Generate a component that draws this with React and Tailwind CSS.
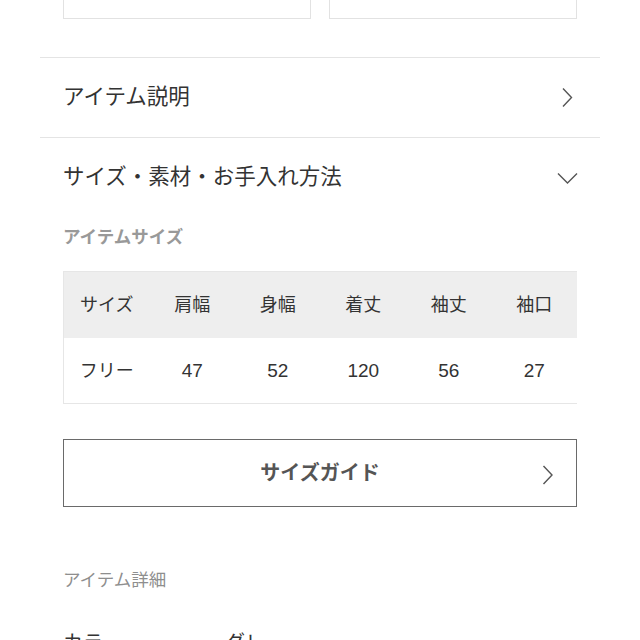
export default function App() {
  const font = { fontFamily: '"Liberation Sans", "Noto Sans CJK JP", sans-serif' };
  const heads = ["サイズ", "肩幅", "身幅", "着丈", "袖丈", "袖口"];
  const vals = ["フリー", "47", "52", "120", "56", "27"];
  return (
    <div className="w-[640px] h-[640px] overflow-hidden bg-white text-[#333]" style={font}>
      <div className="flex gap-[18px] pl-[63px]">
        <div className="w-[248px] h-[19px] border-x border-b border-[#e2e2e2]" />
        <div className="w-[248px] h-[19px] border-x border-b border-[#e2e2e2]" />
      </div>
      <div className="mx-[40px] mt-[38px] border-t border-[#e4e4e4]">
        <div className="h-[80px] flex items-center justify-between pl-[23px] pr-[27px] border-b border-[#e4e4e4]">
          <span className="text-[21.5px] leading-none">アイテム説明</span>
          <svg width="11" height="21" viewBox="0 0 11 21" fill="none">
            <path d="M1 1.5 L9.5 10.5 L1 19.5" stroke="#555" strokeWidth="1.4" />
          </svg>
        </div>
        <div className="h-[80px] flex items-center justify-between pl-[23px] pr-[22px]">
          <span className="text-[21.5px] leading-none">サイズ・素材・お手入れ方法</span>
          <svg width="21" height="13" viewBox="0 0 21 13" fill="none">
            <path d="M1 1.5 L10.5 11 L20 1.5" stroke="#555" strokeWidth="1.4" />
          </svg>
        </div>
        <div className="pl-[23px]">
          <div className="h-[40px] flex items-center text-[17.5px] font-bold text-[#999] leading-none">アイテムサイズ</div>
          <div className="mt-[13px] w-[514px] border-l border-y border-[#e6e6e6]">
            <div className="grid grid-cols-6 h-[66px] items-center bg-[#eeeeee] text-[18px]">
              {heads.map((h) => (
                <div key={h} className="text-center leading-none">{h}</div>
              ))}
            </div>
            <div className="grid grid-cols-6 h-[65px] items-center text-[19px]">
              {vals.map((v, i) => (
                <div key={v} className={i === 0 ? "text-center leading-none text-[18px]" : "text-center leading-none"}>{v}</div>
              ))}
            </div>
          </div>
          <div className="mt-[35px] w-[514px] h-[68px] border-[1.5px] border-[#6a6a6a] flex items-center justify-center relative">
            <span className="text-[20px] font-bold text-[#555] leading-none">サイズガイド</span>
            <svg className="absolute right-[22px] top-[25px]" width="12" height="20" viewBox="0 0 12 20" fill="none">
              <path d="M1.5 1 L10 10 L1.5 19" stroke="#555" strokeWidth="1.4" />
            </svg>
          </div>
          <div className="mt-[57px] h-[34px] flex items-center text-[17.5px] text-[#8e8e8e] leading-none">アイテム詳細</div>
          <div className="mt-[35px] flex text-[20px] leading-none">
            <span className="w-[162px]">カラー</span>
            <span>グレー</span>
          </div>
        </div>
      </div>
    </div>
  );
}
